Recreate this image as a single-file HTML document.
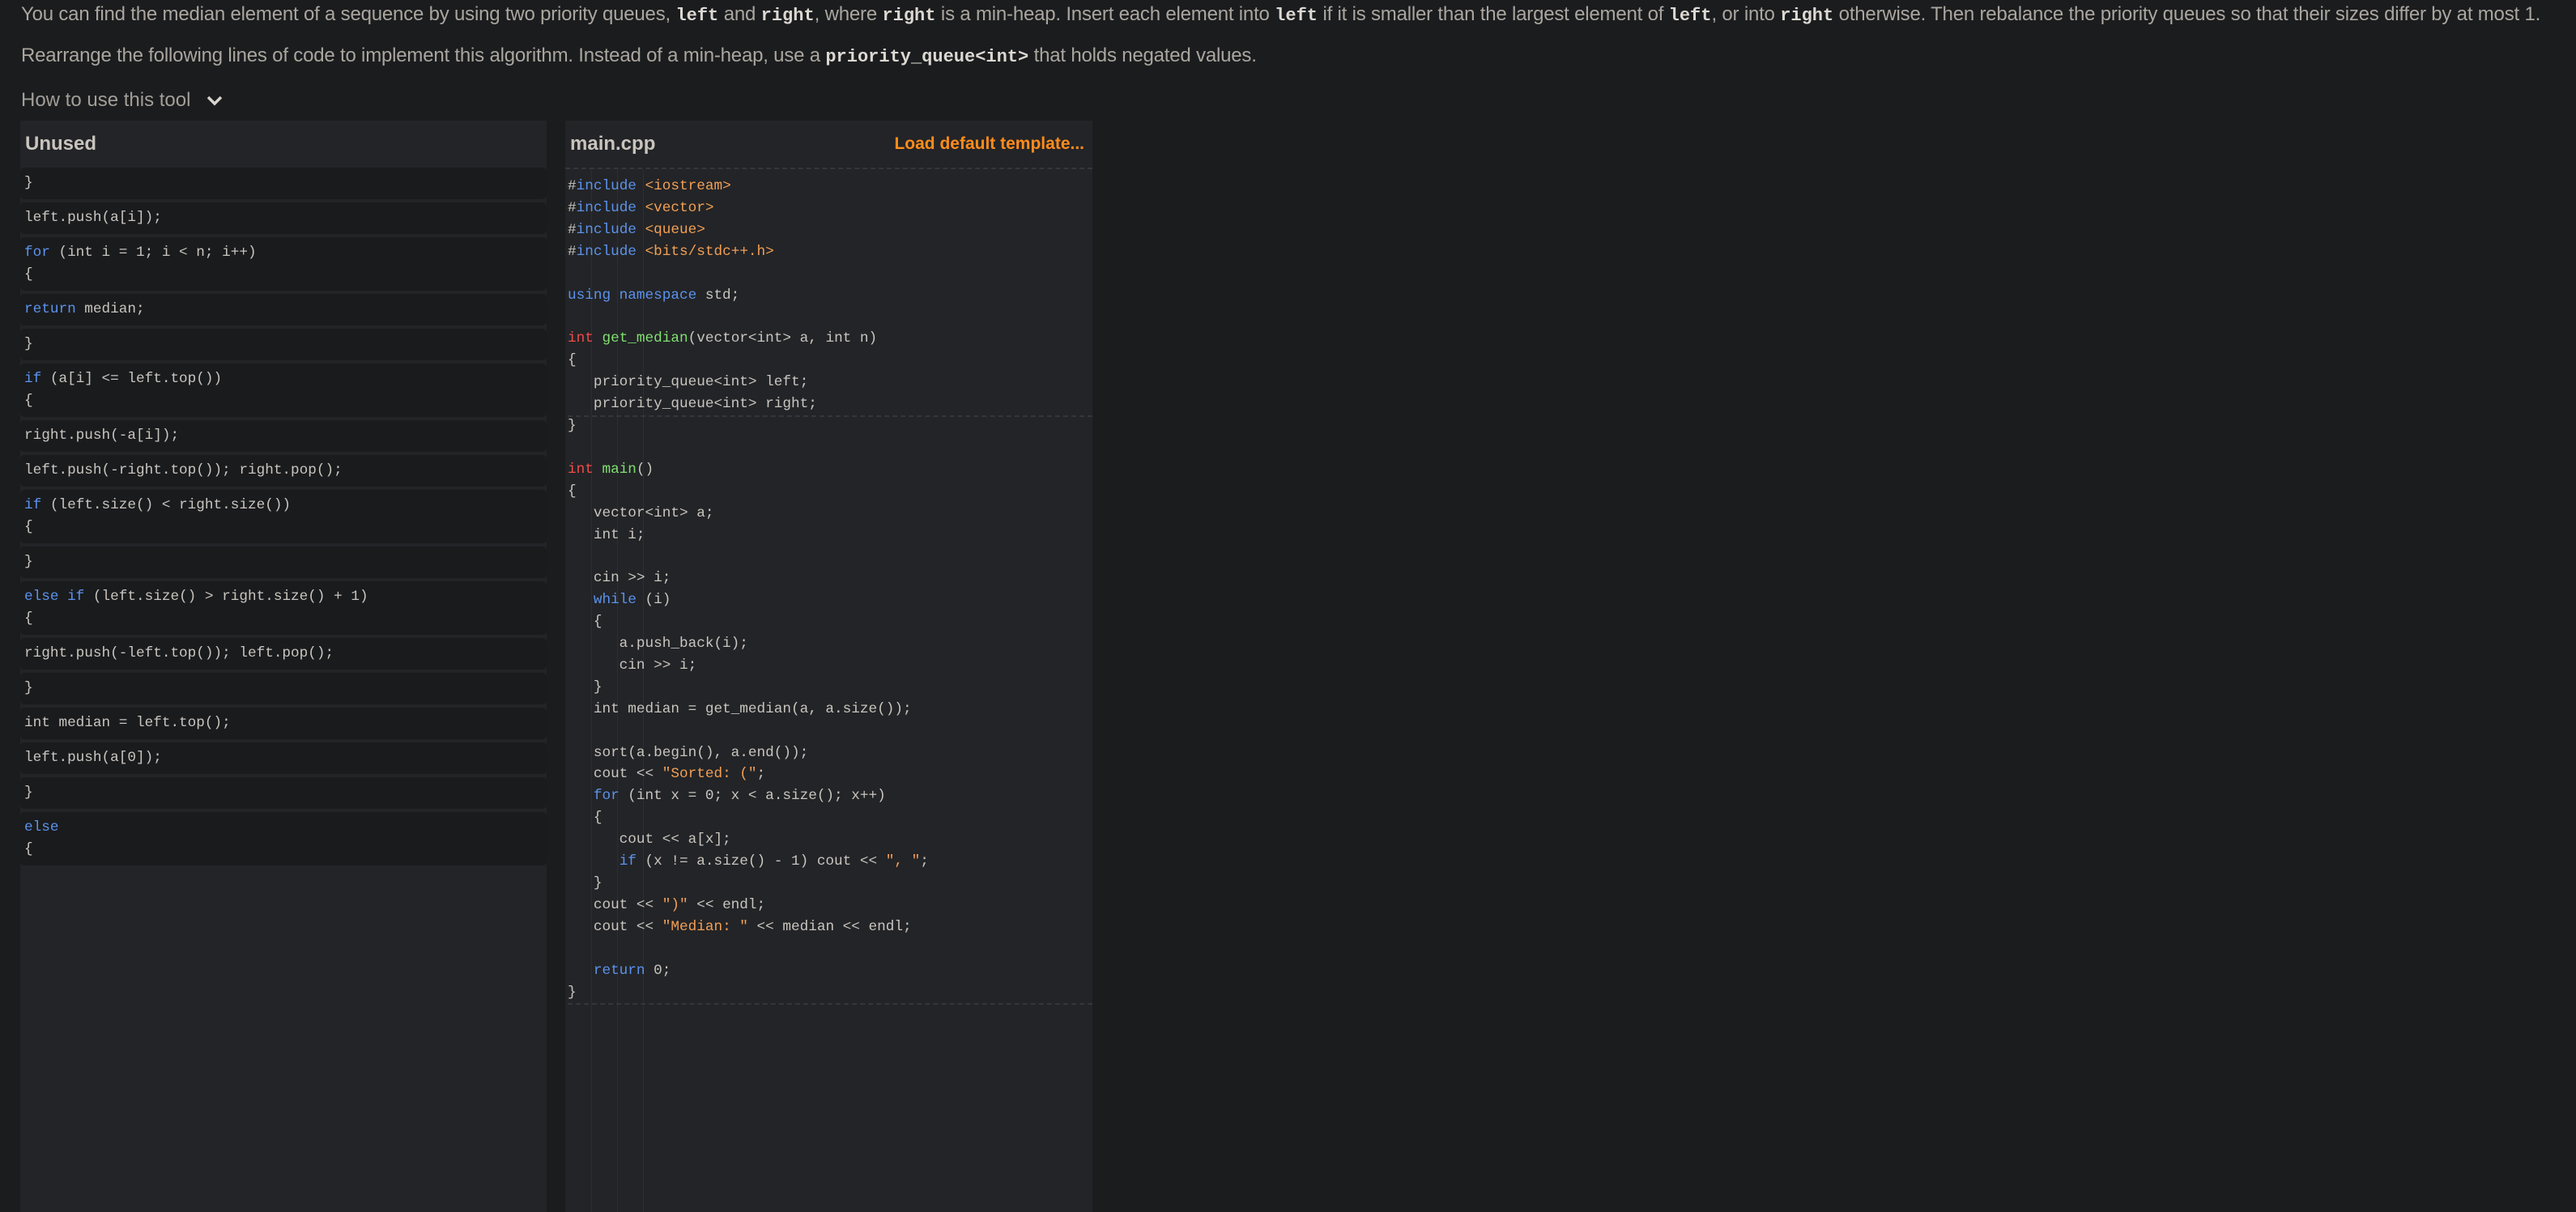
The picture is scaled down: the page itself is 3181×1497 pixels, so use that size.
<!DOCTYPE html>
<html><head><meta charset="utf-8"><style>
*{margin:0;padding:0;box-sizing:border-box}
body{width:3181px;height:1497px;background:#1b1c1e;overflow:hidden;font-family:"Liberation Sans",sans-serif;color:#a9a59f;position:relative}
.p{position:absolute;left:26px;font-size:24px;white-space:nowrap;color:#aaa69f;letter-spacing:-0.2px}
.p code{font-family:"Liberation Mono",monospace;font-weight:bold;color:#dcd8d2;font-size:22px;letter-spacing:0}
.how{position:absolute;left:26px;top:110px;font-size:24px;color:#a29e98}
.how svg{position:absolute;left:228px;top:6px}
.panel{position:absolute;top:149px;bottom:0;background:#232427}
.hd{height:58px;display:flex;align-items:center;justify-content:space-between;padding:0 10px 0 6px;font-weight:bold;font-size:24px;color:#c9c4bd}
.hd a{color:#ff8c1c;font-size:21px}
.mono{font-family:"Liberation Mono",monospace;font-size:17.7px;color:#c9c5bf}
.item{background:#1a1b1d;border-radius:5px;margin-bottom:4px;padding:6px 5px;line-height:27px;white-space:pre}
.k{color:#5b93ec}.s{color:#f2a055}.t{color:#f04b4b}.f{color:#7fe06f}.pp{color:#c9c5bf}
.code{position:relative;border-top:2px dashed #35363a;line-height:26.9px;padding-top:8px}
.code .in{white-space:pre;position:relative}
.g{position:absolute;top:0;bottom:0;width:1px;background:#2d2e32}
.dl{border-bottom:2px dashed #35363a;margin-bottom:-2px}
</style></head><body>
<div class="p" style="top:4px">You can find the median element of a sequence by using two priority queues, <code>left</code> and <code>right</code>, where <code>right</code> is a min-heap. Insert each element into <code>left</code> if it is smaller than the largest element of <code>left</code>, or into <code>right</code> otherwise. Then rebalance the priority queues so that their sizes differ by at most 1.</div>
<div class="p" style="top:55px">Rearrange the following lines of code to implement this algorithm. Instead of a min-heap, use a <code>priority_queue&lt;int&gt;</code> that holds negated values.</div>
<div class="how">How to use this tool<svg width="22" height="16" viewBox="0 0 22 16"><path d="M3 4l8 8 8-8" fill="none" stroke="#d8d4ce" stroke-width="3.5"/></svg></div>

<div class="panel" style="left:25px;width:650px">
<div class="hd">Unused</div>
<div class="mono">
<div class="item">}</div>
<div class="item">left.push(a[i]);</div>
<div class="item"><span class="k">for</span> (int i = 1; i &lt; n; i++)
{</div>
<div class="item"><span class="k">return</span> median;</div>
<div class="item">}</div>
<div class="item"><span class="k">if</span> (a[i] &lt;= left.top())
{</div>
<div class="item">right.push(-a[i]);</div>
<div class="item">left.push(-right.top()); right.pop();</div>
<div class="item"><span class="k">if</span> (left.size() &lt; right.size())
{</div>
<div class="item">}</div>
<div class="item"><span class="k">else if</span> (left.size() &gt; right.size() + 1)
{</div>
<div class="item">right.push(-left.top()); left.pop();</div>
<div class="item">}</div>
<div class="item">int median = left.top();</div>
<div class="item">left.push(a[0]);</div>
<div class="item">}</div>
<div class="item"><span class="k">else</span>
{</div>
</div>
</div>

<div class="panel" style="left:698px;width:651px">
<div class="hd" style="padding-left:6px">main.cpp<a>Load default template...</a></div>
<div class="code mono" style="height:1290px">
<div class="g" style="left:32px"></div><div class="g" style="left:64px"></div><div class="g" style="left:96px"></div>
<div class="in" style="padding-left:3px"><span class="pp">#</span><span class="k">include</span> <span class="s">&lt;iostream&gt;</span>
<span class="pp">#</span><span class="k">include</span> <span class="s">&lt;vector&gt;</span>
<span class="pp">#</span><span class="k">include</span> <span class="s">&lt;queue&gt;</span>
<span class="pp">#</span><span class="k">include</span> <span class="s">&lt;bits/stdc++.h&gt;</span>

<span class="k">using namespace</span> std;

<span class="t">int</span> <span class="f">get_median</span>(vector&lt;int&gt; a, int n)
{
   priority_queue&lt;int&gt; left;
<div class="dl">   priority_queue&lt;int&gt; right;</div>}

<span class="t">int</span> <span class="f">main</span>()
{
   vector&lt;int&gt; a;
   int i;

   cin &gt;&gt; i;
   <span class="k">while</span> (i)
   {
      a.push_back(i);
      cin &gt;&gt; i;
   }
   int median = get_median(a, a.size());

   sort(a.begin(), a.end());
   cout &lt;&lt; <span class="s">"Sorted: ("</span>;
   <span class="k">for</span> (int x = 0; x &lt; a.size(); x++)
   {
      cout &lt;&lt; a[x];
      <span class="k">if</span> (x != a.size() - 1) cout &lt;&lt; <span class="s">", "</span>;
   }
   cout &lt;&lt; <span class="s">")"</span> &lt;&lt; endl;
   cout &lt;&lt; <span class="s">"Median: "</span> &lt;&lt; median &lt;&lt; endl;

   <span class="k">return</span> 0;
<div class="dl">}</div></div>
</div>
</div>
</body></html>
